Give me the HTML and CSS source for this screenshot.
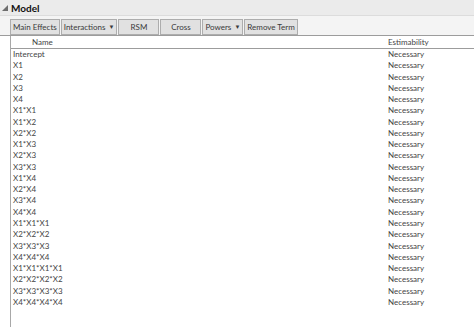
FILE: index.html
```html
<!DOCTYPE html>
<html lang="en">
<head>
    <meta charset="UTF-8">
    <title>Model</title>
    <link rel="stylesheet" href="styles.css">
</head>
<body>

    <!-- Outline title -->
    <div class="outline-title">
        <svg class="disclosure" width="7" height="7" viewBox="0 0 7 7"><polygon points="6,0 6,6 0,6" fill="#6d6d6d"/></svg>
        <span>Model</span>
    </div>

    <!-- Toolbar -->
    <div class="toolbar">
        <button class="btn">Main Effects</button>
        <button class="btn">Interactions <span class="caret">&#9660;</span></button>
        <button class="btn wide">RSM</button>
        <button class="btn wide">Cross</button>
        <button class="btn">Powers <span class="caret">&#9660;</span></button>
        <button class="btn">Remove Term</button>
    </div>

    <!-- Effects list -->
    <div class="effects">
        <div class="row head">
            <div class="name">Name</div>
            <div class="est">Estimability</div>
        </div>
        <div class="row"><div class="name">Intercept</div><div class="est">Necessary</div></div>
        <div class="row"><div class="name">X1</div><div class="est">Necessary</div></div>
        <div class="row"><div class="name">X2</div><div class="est">Necessary</div></div>
        <div class="row"><div class="name">X3</div><div class="est">Necessary</div></div>
        <div class="row"><div class="name">X4</div><div class="est">Necessary</div></div>
        <div class="row"><div class="name">X1*X1</div><div class="est">Necessary</div></div>
        <div class="row"><div class="name">X1*X2</div><div class="est">Necessary</div></div>
        <div class="row"><div class="name">X2*X2</div><div class="est">Necessary</div></div>
        <div class="row"><div class="name">X1*X3</div><div class="est">Necessary</div></div>
        <div class="row"><div class="name">X2*X3</div><div class="est">Necessary</div></div>
        <div class="row"><div class="name">X3*X3</div><div class="est">Necessary</div></div>
        <div class="row"><div class="name">X1*X4</div><div class="est">Necessary</div></div>
        <div class="row"><div class="name">X2*X4</div><div class="est">Necessary</div></div>
        <div class="row"><div class="name">X3*X4</div><div class="est">Necessary</div></div>
        <div class="row"><div class="name">X4*X4</div><div class="est">Necessary</div></div>
        <div class="row"><div class="name">X1*X1*X1</div><div class="est">Necessary</div></div>
        <div class="row"><div class="name">X2*X2*X2</div><div class="est">Necessary</div></div>
        <div class="row"><div class="name">X3*X3*X3</div><div class="est">Necessary</div></div>
        <div class="row"><div class="name">X4*X4*X4</div><div class="est">Necessary</div></div>
        <div class="row"><div class="name">X1*X1*X1*X1</div><div class="est">Necessary</div></div>
        <div class="row"><div class="name">X2*X2*X2*X2</div><div class="est">Necessary</div></div>
        <div class="row"><div class="name">X3*X3*X3*X3</div><div class="est">Necessary</div></div>
        <div class="row"><div class="name">X4*X4*X4*X4</div><div class="est">Necessary</div></div>
    </div>

</body>
</html>
```

FILE: styles.css
```css
body {
    margin: 0;
    font-family: Lato, "Open Sans", sans-serif;
    font-size: 8px;
    color: #444;
    background: #fff;
    height: 327px;
    overflow: hidden;
}

/* Outline title bar */
.outline-title {
    height: 15px;
    background: #ebebeb;
    border-bottom: 1px solid #dcdcdc;
    display: flex;
    align-items: center;
    gap: 2px;
    padding-left: 2px;
    font-size: 10px;
    font-weight: bold;
    color: #111;
}

.disclosure {
    margin-top: 1px;
}

/* Toolbar */
.toolbar {
    height: 20px;
    background: #f4f4f4;
    border-bottom: 1px solid #9c9c9c;
    display: flex;
    align-items: flex-start;
    gap: 1px;
    padding: 3px 0 0 10px;
    box-sizing: border-box;
}

.btn {
    font-family: inherit;
    font-size: 8px;
    color: #3a3a3a;
    height: 16px;
    padding: 0 2px;
    background: #e1e1e1;
    border: 1px solid #adadad;
    border-radius: 0;
}

.btn.wide {
    width: 41px;
}

.caret {
    font-size: 6px;
    margin-left: 1px;
    vertical-align: 1px;
}

/* Effects list */
.effects {
    margin-left: 10px;
    border-left: 1px solid #a8a8a8;
    height: 300px;
}

.row {
    display: flex;
    height: 11.27px;
    line-height: 11.27px;
}

.row.head {
    height: 12px;
    line-height: 12px;
    border-bottom: 1px solid #9c9c9c;
}

.name {
    width: 375px;
    padding-left: 2px;
}

.head .name {
    padding-left: 21px;
    width: 356px;
}

.est {
    flex: 1;
}
```
